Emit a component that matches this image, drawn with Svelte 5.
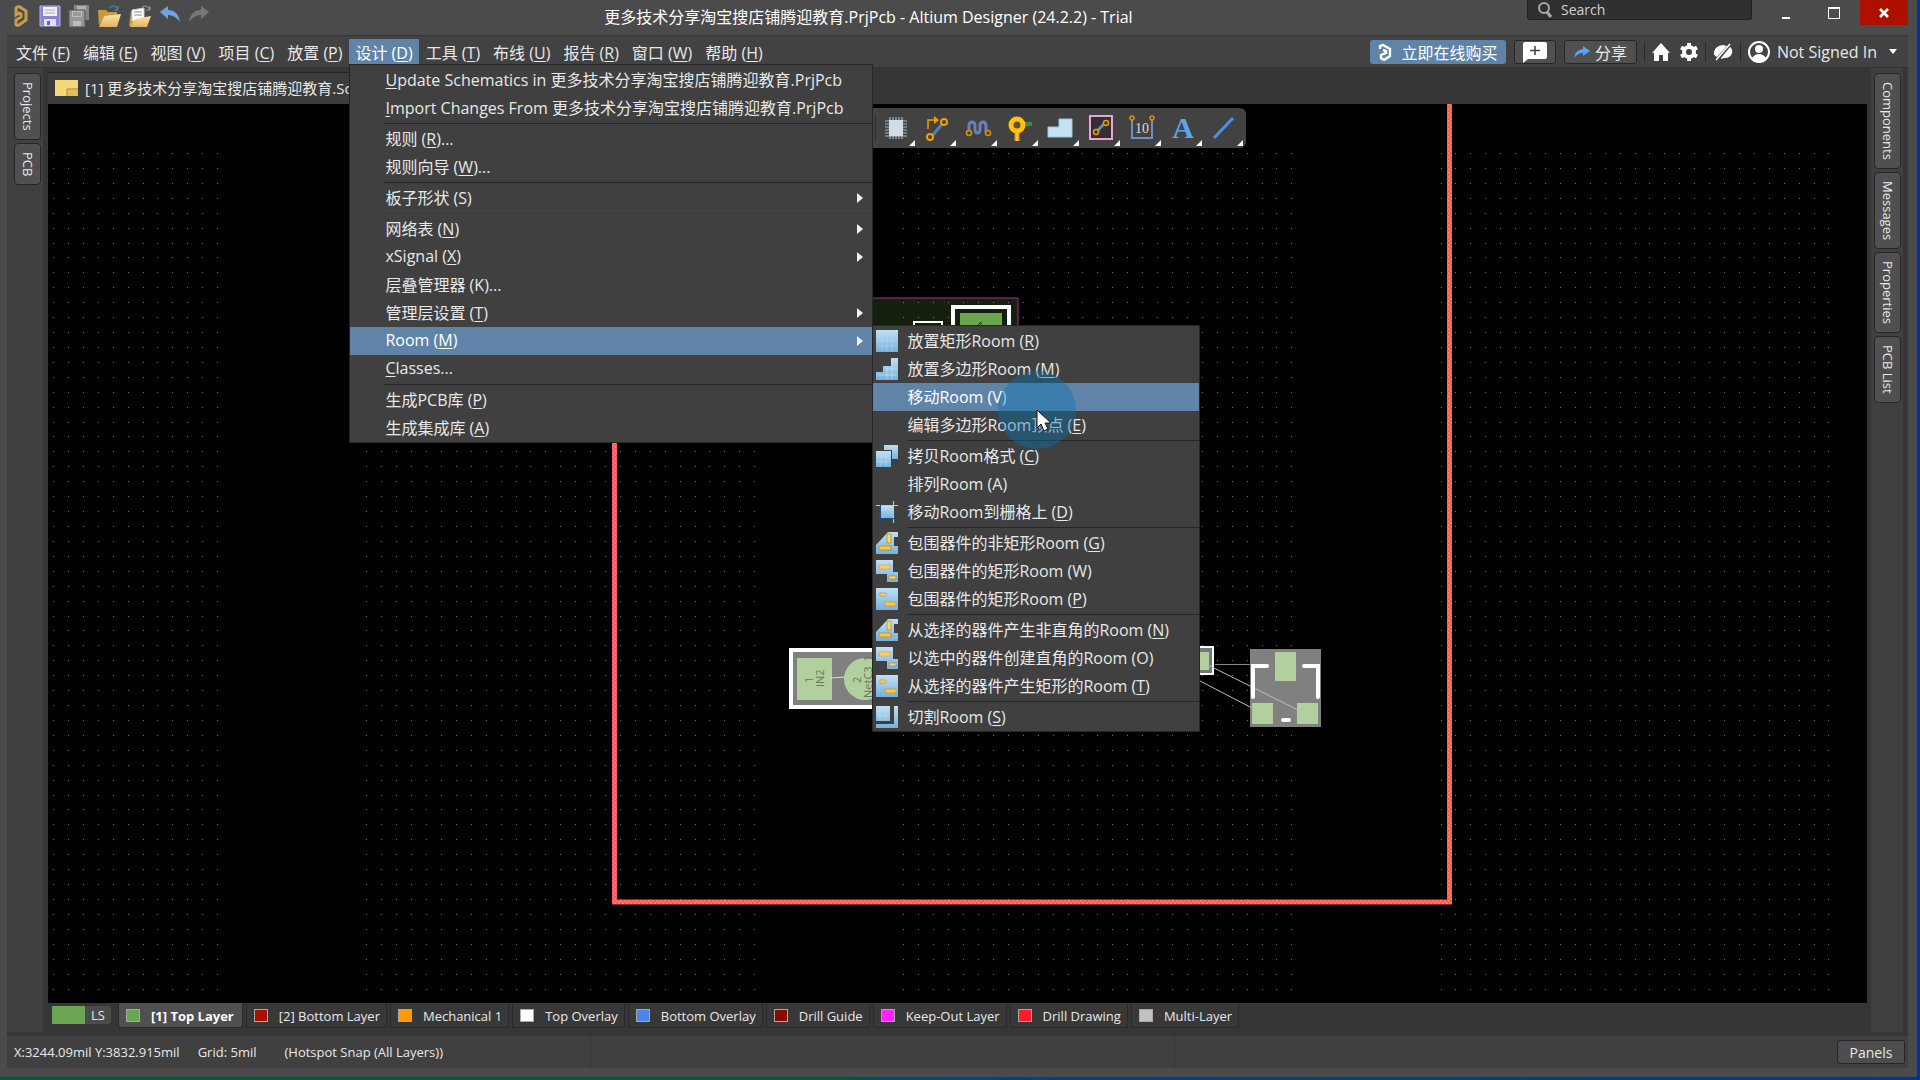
<script lang="ts">
    type Entry = { label?: string; icon?: string; arrow?: boolean; on?: boolean; sep?: boolean; faint?: boolean };

    const menus = [
        "文件 (&F)", "编辑 (&E)", "视图 (&V)", "项目 (&C)", "放置 (&P)", "设计 (&D)",
        "工具 (&T)", "布线 (&U)", "报告 (&R)", "窗口 (&W)", "帮助 (&H)",
    ];
    let opened = $state(5);

    const designMenu: Entry[] = [
        { label: "&Update Schematics in 更多技术分享淘宝搜店铺腾迎教育.PrjPcb" },
        { label: "&Import Changes From 更多技术分享淘宝搜店铺腾迎教育.PrjPcb" },
        { sep: true },
        { label: "规则 (&R)..." },
        { label: "规则向导 (&W)..." },
        { sep: true },
        { label: "板子形状 (S)", arrow: true },
        { sep: true, faint: true },
        { label: "网络表 (&N)", arrow: true },
        { label: "xSignal (&X)", arrow: true },
        { label: "层叠管理器 (K)..." },
        { label: "管理层设置 (&T)", arrow: true },
        { label: "Room (&M)", arrow: true, on: true },
        { label: "&Classes..." },
        { sep: true },
        { label: "生成PCB库 (&P)" },
        { label: "生成集成库 (&A)" },
    ];

    const roomMenu: Entry[] = [
        { label: "放置矩形Room (&R)", icon: "rect" },
        { label: "放置多边形Room (&M)", icon: "poly" },
        { label: "移动Room (V)", on: true },
        { label: "编辑多边形Room顶点 (&E)" },
        { sep: true },
        { label: "拷贝Room格式 (&C)", icon: "copy" },
        { label: "排列Room (A)" },
        { label: "移动Room到栅格上 (&D)", icon: "snap" },
        { sep: true },
        { label: "包围器件的非矩形Room (&G)", icon: "angled" },
        { label: "包围器件的矩形Room (W)", icon: "ortho" },
        { label: "包围器件的矩形Room (&P)", icon: "box" },
        { sep: true },
        { label: "从选择的器件产生非直角的Room (&N)", icon: "angled" },
        { label: "以选中的器件创建直角的Room (O)", icon: "ortho" },
        { label: "从选择的器件产生矩形的Room (&T)", icon: "box" },
        { sep: true },
        { label: "切割Room (&S)", icon: "slice" },
    ];

    const layers = [
        { name: "[1] Top Layer", color: "#6aa552", active: true },
        { name: "[2] Bottom Layer", color: "#a81000" },
        { name: "Mechanical 1", color: "#ff9a00" },
        { name: "Top Overlay", color: "#ffffff" },
        { name: "Bottom Overlay", color: "#4a85ea" },
        { name: "Drill Guide", color: "#8a0c00" },
        { name: "Keep-Out Layer", color: "#ff22ff" },
        { name: "Drill Drawing", color: "#ff1a2c" },
        { name: "Multi-Layer", color: "#c2c2c2" },
    ];

    const tools = ["chip", "route", "meander", "via", "polygon", "room", "dimension", "string", "line"];
    const leftPanels = ["Projects", "PCB"];
    const rightPanels = ["Components", "Messages", "Properties", "PCB List"];

    // visible grid points, the columns come in four bands
    const step = 14.92;
    const bands = [[0, 11], [21, 47], [57, 83], [93, 119]];
    let grid = "";
    for (const [from, to] of bands) {
        for (let c = from; c <= to; c++) {
            for (let r = 0; r <= 56; r++) {
                grid += `M${Math.round(53 + c * step)} ${Math.round(153 + r * step)}h1v1h-1z`;
            }
        }
    }

    // "&" stands before the access key
    function split(label: string) {
        const at = label.indexOf("&");
        if (at < 0) return [label, "", ""];
        return [label.slice(0, at), label[at + 1], label.slice(at + 2)];
    }
</script>

{#snippet caption(label: string)}
    {@const parts = split(label)}
    <span class="caption">{parts[0]}{#if parts[1]}<u>{parts[1]}</u>{/if}{parts[2]}</span>
{/snippet}

{#snippet roomIcon(name: string)}
    <svg width="24" height="24" viewBox="0 0 24 24">
        {#if name === "rect"}
            <path d="M1 1h22v22H1z" fill="url(#sky)" />
            <path d="M7 3v19M12 3v19M17 3v19M2 12h20M2 17h20" stroke="#b5dcf4" stroke-opacity=".5" />
        {:else if name === "poly"}
            <path d="M16 1h7v22H1v-8h7V9h8z" fill="url(#sky)" />
            <path d="M12 10v12M17 3v19M2 18h20M10 12h12" stroke="#c5e4f7" stroke-opacity=".6" />
        {:else if name === "copy"}
            <path d="M9 1h14v14H9z" fill="url(#sky)" />
            <path d="M0 6h17v17H0z" fill="#404040" />
            <path d="M1 7h15v16H1z" fill="url(#sky)" />
            <path d="M6 8v14M11 8v14M2 13h13M2 18h13" stroke="#c5e4f7" stroke-opacity=".5" />
        {:else if name === "snap"}
            <path d="M6 6h13v13H6z" fill="url(#sky)" />
            <path d="M1 5.5h22M18.500 1v22" stroke="#b9cfdd" />
            <path d="M1 18.500h22M5.500 3v19" stroke="#244d78" />
        {:else if name === "angled"}
            <path d="M1 14 13 1h10v5h-4v9h4v8H1z" fill="url(#sky)" />
            <path d="M12 3h4v9h-4z" fill="#ffd75a" stroke="#9b7b24" stroke-width=".6" />
            <path d="M4 15h12v4H4z" fill="#ffc83c" stroke="#9b7b24" stroke-width=".6" />
        {:else if name === "ortho"}
            <path d="M1 1h17v12h5v10H12v-8H1z" fill="url(#sky)" />
            <path d="M4 6h11v4H4z" fill="#ffd062" stroke="#d9a02c" stroke-width=".6" />
            <path d="M14 17h7v3h-7z" fill="#ffd062" stroke="#a57b22" stroke-width=".6" />
        {:else if name === "box"}
            <path d="M1 1h22v22H1z" fill="url(#sky)" />
            <path d="M5 6h6v3H5z" fill="#ffd062" stroke="#b88a2b" stroke-width=".6" />
            <path d="M10 15h11v4H10z" fill="#ffc83c" stroke="#b88a2b" stroke-width=".6" />
        {:else}
            <path d="M1 1h14v15H1zM19 1h4v22H1v-4h18z" fill="url(#sky)" />
            <path d="M5 2v13M10 2v13M2 6h12M2 11h12" stroke="#c5e4f7" stroke-opacity=".5" />
        {/if}
    </svg>
{/snippet}

{#snippet toolIcon(name: string)}
    <svg width="28" height="32" viewBox="0 0 28 32">
        {#if name === "chip"}
            <path d="M8 5v22M11 5v22M14 5v22M17 5v22M20 5v22M3 9h22M3 12h22M3 15h22M3 18h22M3 21h22M3 24h22" stroke="#aab3b8" stroke-width="1.200" />
            <path d="M7 8h14v16H7z" fill="#d4dce4" />
        {:else if name === "route"}
            <path d="M9 24 20 11" stroke="#5a80b0" stroke-width="3" />
            <path d="M5 17V8h9" fill="none" stroke="#f0a000" stroke-width="1.500" />
            <path d="m11 4 5 4-5 4z" fill="#f0a000" />
            <circle cx="21" cy="10" r="3" fill="#404040" stroke="#f0a000" stroke-width="2" />
            <circle cx="7" cy="25" r="3" fill="#404040" stroke="#f0a000" stroke-width="2" />
        {:else if name === "meander"}
            <path d="M5 21V14q0-4 3-4t3 4v3q0 4 2.500 4t2.500-4v-3q0-4 3-4t3 4v7" fill="none" stroke="#6683b8" stroke-width="3" />
            <circle cx="5" cy="21" r="2.500" fill="#404040" stroke="#d99100" stroke-width="1.600" />
            <circle cx="24" cy="21" r="2.500" fill="#404040" stroke="#d99100" stroke-width="1.600" />
        {:else if name === "via"}
            <path d="M16 12h11" stroke="#3f8b35" stroke-width="4" />
            <path d="M12 18v11" stroke="#f39a28" stroke-width="5" />
            <path d="M12 20v9" stroke="#ffe1a0" stroke-width="1" />
            <circle cx="12" cy="13" r="6" fill="#5f5030" stroke="#ffc505" stroke-width="5" />
        {:else if name === "polygon"}
            <path d="M13 7h13v18H2v-10h11z" fill="#c6e3f1" stroke="#96c5de" />
        {:else if name === "room"}
            <path d="M3 4h22v23H3z" fill="#303030" stroke="#eda0da" stroke-width="2" />
            <path d="m9 20 9-9" stroke="#7187ad" stroke-width="3" />
            <circle cx="19" cy="11" r="2.500" fill="#303030" stroke="#e59d00" stroke-width="1.500" />
            <circle cx="9" cy="20" r="2.500" fill="#303030" stroke="#e59d00" stroke-width="1.500" />
        {:else if name === "dimension"}
            <path d="M4 8v18h20V8" fill="none" stroke="#6f8fc4" stroke-width="2" />
            <circle cx="4" cy="6" r="2" fill="#404040" stroke="#d99100" stroke-width="1.500" />
            <circle cx="24" cy="6" r="2" fill="#404040" stroke="#d99100" stroke-width="1.500" />
            <text x="14" y="21" text-anchor="middle" font-family="'Liberation Serif', serif" font-size="14" fill="#dadada">10</text>
        {:else if name === "string"}
            <text x="14" y="26" text-anchor="middle" font-family="'Liberation Serif', serif" font-weight="bold" font-size="30" fill="#5fa5ee">A</text>
        {:else}
            <path d="M4 26 23 6" stroke="#4f8fe8" stroke-width="3" />
        {/if}
    </svg>
{/snippet}

<svg class="defs" width="0" height="0" aria-hidden="true">
    <defs>
        <linearGradient id="sky" x1="0" y1="0" x2="0" y2="1">
            <stop offset="0" stop-color="#c1dff3" />
            <stop offset="1" stop-color="#77b0dc" />
        </linearGradient>
        <linearGradient id="folder" x1="0" y1="0" x2="0" y2="1">
            <stop offset="0" stop-color="#fbe5ae" />
            <stop offset="1" stop-color="#e2b45a" />
        </linearGradient>
        <pattern id="hatch" width="4" height="4" patternUnits="userSpaceOnUse">
            <path d="M0 0h4v4H0z" fill="#ff4d86" />
            <path d="M0 0h2v2H0zM2 2h2v2H2z" fill="#ff8a1c" />
        </pattern>
    </defs>
</svg>

<div class="window">
    <header class="titlebar">
        <div class="quick">
            <svg width="22" height="24" viewBox="0 0 22 24">
                <path d="M6 4q1-2 4-1l6 4v9l-7 5q-3 1-3-1v-4l5-3v-3L9 9l-3 2z" fill="none" stroke="#c59d4b" stroke-width="3" />
            </svg>
            <button aria-label="Save">
                <svg width="22" height="24" viewBox="0 0 22 24">
                    <path d="M1 2h20v20H1z" fill="#8785cf" stroke="#b4b2e8" />
                    <path d="M4 3h14v9H4z" fill="#f0f2f4" />
                    <path d="M6 6h10M6 9h10" stroke="#a6a6b0" />
                    <path d="M5 15h12v7H5z" fill="#dfe2f2" />
                    <path d="M8 17h3v4H8z" fill="#6664a8" />
                </svg>
            </button>
            <button aria-label="Save all">
                <svg width="22" height="24" viewBox="0 0 22 24">
                    <path d="M6 1h15v15H6z" fill="#858585" />
                    <path d="M9 2h9v5H9z" fill="#b0b0b0" />
                    <path d="M1 6h16v17H1z" fill="#969696" stroke="#565656" />
                    <path d="M4 7h10v6H4z" fill="#bebebe" />
                    <path d="M5 9h8M5 11h8" stroke="#777" />
                    <path d="M5 17h8v5H5z" fill="#bcbcbc" />
                </svg>
            </button>
            <button aria-label="Open">
                <svg width="24" height="24" viewBox="0 0 24 24">
                    <path d="M1 6h8l2 2h9v4H7L2 22z" fill="#c99a42" />
                    <path d="m7 12 17-2-4 13H2z" fill="url(#folder)" />
                    <path d="M12 4q6-5 9 2m0 0V2m0 4h-4" fill="none" stroke="#4a7894" stroke-width="1.500" />
                </svg>
            </button>
            <button aria-label="Open document">
                <svg width="24" height="24" viewBox="0 0 24 24">
                    <path d="M3 7h3v15H1z" fill="#c99a42" />
                    <path d="M4 6 16 4v13H4z" fill="#fff" stroke="#ccc" />
                    <path d="M6 8h8M6 11h8" stroke="#888" />
                    <path d="m7 15 16-3-4 11H2z" fill="url(#folder)" />
                    <path d="M14 3q5-3 8 3m0 0V2m0 4h-4" fill="none" stroke="#8c949a" stroke-width="1.200" />
                </svg>
            </button>
            <button aria-label="Undo">
                <svg width="22" height="24" viewBox="0 0 22 24">
                    <path d="m1 8 8-6v4q10 0 12 12-5-7-12-7v4z" fill="#6fa3e6" />
                </svg>
            </button>
            <button aria-label="Redo">
                <svg width="22" height="24" viewBox="0 0 22 24">
                    <path d="m21 8-8-6v4Q3 6 1 18q5-7 12-7v4z" fill="#777" />
                </svg>
            </button>
        </div>
        <div class="title">更多技术分享淘宝搜店铺腾迎教育.PrjPcb - Altium Designer (24.2.2) - Trial</div>
        <label class="search">
            <svg width="16" height="16" viewBox="0 0 16 16">
                <circle cx="7" cy="6" r="5" fill="none" stroke="#a8a8a8" stroke-width="2" />
                <path d="m10 10 4 5" stroke="#a8a8a8" stroke-width="3" />
            </svg>
            <input type="text" placeholder="Search" aria-label="Search" />
        </label>
        <div class="winbuttons">
            <button aria-label="Minimize"><svg width="12" height="12" viewBox="0 0 12 12"><path d="M2 10h8v2H2z" fill="#fff" /></svg></button>
            <button aria-label="Maximize"><svg width="12" height="12" viewBox="0 0 12 12"><path d="M.5 1h11v10.500H.5z" fill="none" stroke="#fff" /><path d="M0 0h12v2H0z" fill="#fff" /></svg></button>
            <button class="close" aria-label="Close"><svg width="10" height="10" viewBox="0 0 10 10"><path d="m1 1 8 8M9 1 1 9" stroke="#fff" stroke-width="2.600" /></svg></button>
        </div>
    </header>

    <div class="menubar">
        <nav>
            {#each menus as menu, i}
                <div class="menu">
                    <button class="menu-title" class:open={opened === i} onclick={() => (opened = i)}>{@render caption(menu)}</button>
                    {#if i === 5 && opened === 5}
                        <div class="dropdown">
                            {#each designMenu as item}
                                {#if item.sep}
                                    <div class="sep" class:faint={item.faint}></div>
                                {:else}
                                    <div class="row">
                                        <button class="entry" class:on={item.on}>
                                            {@render caption(item.label)}
                                            {#if item.arrow}
                                                <svg width="6" height="10" viewBox="0 0 6 10"><path d="m0 0 6 5-6 5z" fill="#f2f2f2" /></svg>
                                            {/if}
                                        </button>
                                        {#if item.on}
                                            <div class="dropdown sub">
                                                {#each roomMenu as sub}
                                                    {#if sub.sep}
                                                        <div class="sep"></div>
                                                    {:else}
                                                        <button class="entry" class:on={sub.on}>
                                                            <span class="slot">{#if sub.icon}{@render roomIcon(sub.icon)}{/if}</span>
                                                            {@render caption(sub.label)}
                                                        </button>
                                                    {/if}
                                                {/each}
                                            </div>
                                        {/if}
                                    </div>
                                {/if}
                            {/each}
                        </div>
                    {/if}
                </div>
            {/each}
        </nav>
        <div class="account">
            <button class="buy">
                <svg width="14" height="18" viewBox="0 0 14 18"><path d="M2 6V3l3-1 7 4v7l-6 4-3-2v-3l5-2V8L5 7" fill="none" stroke="#fff" stroke-width="2.400" /></svg>
                <span>立即在线购买</span>
            </button>
            <button class="boxed note" aria-label="Comment">
                <svg width="26" height="22" viewBox="0 0 26 22"><path d="M3 1h20q2 0 2 2v13q0 2-2 2H6l-5 4V3q0-2 2-2z" fill="#fff" /><path d="M13 5v9M8 9.500h10" stroke="#444" stroke-width="1.600" /></svg>
            </button>
            <button class="boxed share">
                <svg width="16" height="14" viewBox="0 0 16 14"><path d="m9 1 7 5-7 5V8Q4 8 0 13 1 5 9 4z" fill="#58a4f2" /></svg>
                <span>分享</span>
            </button>
            <i class="divider"></i>
            <button aria-label="Home">
                <svg width="18" height="18" viewBox="0 0 18 18"><path d="m9 0 9 10h-2v8h-5v-6H7v6H2v-8H0z" fill="#fff" /></svg>
            </button>
            <button aria-label="Preferences">
                <svg width="18" height="18" viewBox="0 0 18 18">
                    <circle cx="9" cy="9" r="5" fill="none" stroke="#fff" stroke-width="4" />
                    <path d="M9 0v4M9 14v4M1 4.500l4 2M13 11.500l4 2M1 13.500l4-2M13 6.500l4-2" stroke="#fff" stroke-width="4" />
                </svg>
            </button>
            <i class="divider"></i>
            <button aria-label="Notifications off">
                <svg width="20" height="18" viewBox="0 0 20 18">
                    <path d="M1 9q1-6 9-7l4 1L4 14q-4-2-3-5zM8 15 17 4q3 2 2 6-1 5-8 5l-3 1z" fill="#fff" />
                    <path d="M3 17 17 1" stroke="#fff" stroke-width="1.500" />
                </svg>
            </button>
            <i class="divider"></i>
            <button class="user">
                <svg width="22" height="22" viewBox="0 0 22 22">
                    <circle cx="11" cy="11" r="10" fill="#444" stroke="#fff" stroke-width="2" />
                    <circle cx="11" cy="8" r="4" fill="#fff" />
                    <path d="M4 17q3-4 7-4t7 4q-3 4-7 4t-7-4z" fill="#fff" />
                </svg>
                <span>Not Signed In</span>
                <svg class="caret" width="8" height="5" viewBox="0 0 8 5"><path d="M0 0h8L4 5z" fill="#fff" /></svg>
            </button>
        </div>
    </div>

    <div class="workspace">
        <aside>
            {#each leftPanels as name}
                <button class="panel-tab">{name}</button>
            {/each}
        </aside>
        <main>
            <div class="documents">
                <button class="document">
                    <svg width="23" height="16" viewBox="0 0 23 16"><path d="M0 0h23v16H0z" fill="#f3d779" /><path d="M12 16V9h11" fill="none" stroke="#9c8544" /><path d="M13 10h10v6H13z" fill="#e0be58" /></svg>
                    <span>[1] 更多技术分享淘宝搜店铺腾迎教育.Sc</span>
                </button>
            </div>
            <div class="stage">
                <svg width="100%" height="100%">
                    <g transform="translate(-48 -104)">
                        <path d="M800 298h218v140H800z" fill="#141f0e" stroke="#a0309c" />
                        <path d={grid} fill="#747474" />
                        <path d="M953 400v-93h56v93" fill="none" stroke="#fff" stroke-width="4" />
                        <path d="M960 313h42v60h-42z" fill="#6aa550" />
                        <path d="M914 350v-28h28v28" fill="none" stroke="#fff" stroke-width="2" />
                        <path d="m978 325 3-3v4" fill="none" stroke="#1d3512" />
                        <path d="M614.500 90v812h835V90" fill="none" stroke="#ff45a0" stroke-width="5" />
                        <path d="M614.500 90v812h835V90" fill="none" stroke="url(#hatch)" stroke-width="4" />

                        <path d="M791 650h150v57H791z" fill="#808080" stroke="#fff" stroke-width="4" />
                        <path d="M797 658h35v42h-35z" fill="#b2d09e" />
                        <circle cx="865" cy="679" r="21" fill="#b2d09e" />
                        <path d="m830 678 15-1" stroke="#ddd" />
                        <g class="net">
                            <text transform="translate(813 683) rotate(-90)">1</text>
                            <text transform="translate(824 687) rotate(-90)">IN2</text>
                            <text transform="translate(861 683) rotate(-90)">2</text>
                            <text transform="translate(872 698) rotate(-90)">NetC3_1</text>
                        </g>

                        <path d="M1180 647h33v27h-33z" fill="#777" stroke="#fff" stroke-width="2" />
                        <path d="M1190 652h19v18h-19z" fill="#b2d09e" />
                        <path d="M1250 649h71v78h-71z" fill="#808080" />
                        <path d="M1275 652h21v29h-21zM1252 703h21v21h-21zM1297 703h21v21h-21z" fill="#b2d09e" />
                        <path d="M1215 664.500h60" stroke="#8c8872" />
                        <path d="m1208 665 90 45M1200 681l54 28" stroke="#bdbdbd" />
                        <path d="M1253 697v-31h14M1304 666h14v31M1283 720h6" fill="none" stroke="#fff" stroke-width="4" stroke-linecap="round" />
                    </g>
                </svg>
                <div class="toolbar">
                    <i></i>
                    {#each tools as tool}
                        <button aria-label={tool}>{@render toolIcon(tool)}</button>
                    {/each}
                </div>
            </div>
            <div class="layers">
                <button class="set"><i></i><span>LS</span></button>
                {#each layers as layer}
                    <button class="layer" class:active={layer.active}>
                        <i style="background: {layer.color}"></i>
                        <span>{layer.name}</span>
                    </button>
                {/each}
            </div>
        </main>
        <aside class="right">
            {#each rightPanels as name}
                <button class="panel-tab">{name}</button>
            {/each}
        </aside>
    </div>

    <footer>
        <div class="cell info">
            <span>X:3244.09mil Y:3832.915mil</span>
            <span>Grid: 5mil</span>
            <span class="snap">(Hotspot Snap (All Layers))</span>
        </div>
        <div class="cell"></div>
        <div class="cell last"><button class="panels">Panels</button></div>
    </footer>
</div>
<div class="taskbar"></div>

<div class="pointer">
    <svg width="78" height="78" viewBox="0 0 78 78">
        <circle cx="39" cy="39" r="39" fill="#0873b4" fill-opacity=".4" />
        <path d="M39 39v18l4-4 3 7 4-2-3-6h6z" fill="#fff" stroke="#111" />
    </svg>
</div>

<style>
    :global(body) {
        margin: 0;
        overflow: hidden;
        background: #4b4b4b;
    }
    :global(#app) {
        height: 100vh;
        display: flex;
        flex-direction: column;
        font-family: "Open Sans", "Noto Sans CJK SC", sans-serif;
        font-size: 16px;
        color: #e8e8e8;
    }
    button {
        font: inherit;
        color: inherit;
        background: none;
        border: none;
        padding: 0;
        display: flex;
        align-items: center;
        white-space: nowrap;
    }
    svg {
        display: block;
        flex: none;
    }
    .defs {
        position: absolute;
    }

    .window {
        flex: 1;
        min-height: 0;
        display: flex;
        flex-direction: column;
        padding: 0 9px 9px 7px;
        border-right: 3px solid #0033a0;
        background: #4b4b4b;
    }
    .taskbar {
        height: 3px;
        background: linear-gradient(90deg, #005a34 44%, #004a73 46%, #0033a0);
    }

    .titlebar {
        height: 35px;
        display: flex;
        align-items: flex-start;
    }
    .quick {
        display: flex;
        gap: 7px;
        padding: 4px 0 0 3px;
    }
    .title {
        flex: 1;
        line-height: 34px;
        text-align: center;
        color: #fff;
    }
    .search {
        display: flex;
        align-items: center;
        gap: 8px;
        width: 225px;
        height: 20px;
        padding-left: 9px;
        background: #303030;
        border: 1px solid #222;
        border-top: none;
        border-radius: 0 0 3px 3px;
        box-sizing: border-box;
    }
    .search input {
        flex: 1;
        min-width: 0;
        padding: 0;
        border: none;
        outline: none;
        background: none;
        font: inherit;
        font-size: 14px;
        line-height: 18px;
        color: #ddd;
    }
    .search input::placeholder {
        color: #d0d0d0;
    }
    .winbuttons {
        display: flex;
        padding-left: 10px;
    }
    .winbuttons button {
        width: 48px;
        height: 25px;
        justify-content: center;
    }
    .winbuttons .close {
        margin-left: 2px;
        background: #ae1000;
    }

    .menubar {
        height: 33px;
        display: flex;
        justify-content: space-between;
        background: #424242;
        border-top: 1px solid #363636;
        border-bottom: 1px solid #333;
        box-sizing: border-box;
    }
    nav {
        display: flex;
        align-items: flex-start;
        gap: 1px;
        padding: 3px 0 0 3px;
    }
    .menu {
        position: relative;
    }
    .menu-title {
        height: 25px;
        padding: 0 6px;
    }
    .menu-title.open {
        background: #5f84a8;
        color: #fff;
    }
    .caption {
        white-space: pre;
    }
    u {
        text-underline-offset: 2px;
    }

    .dropdown {
        position: absolute;
        z-index: 2;
        top: 100%;
        left: 0;
        width: 524px;
        padding-top: 1px;
        border: 1px solid #262626;
        background: #404040;
        box-sizing: border-box;
    }
    .row {
        position: relative;
    }
    .entry {
        width: 100%;
        height: 28px;
        padding: 0 9px 0 35px;
        justify-content: space-between;
    }
    .entry.on {
        background: #5f84a8;
        color: #fff;
    }
    .entry .caption {
        padding-bottom: 3px;
    }
    .sep {
        height: 1px;
        margin: 1px 0 1px 34px;
        background: #262626;
    }
    .sep.faint {
        background: #3b3b3b;
    }
    .sub {
        top: -2px;
        left: 100%;
        width: 328px;
    }
    .sub .entry {
        padding: 0 0 0 2px;
        justify-content: flex-start;
    }
    .slot {
        width: 32px;
        height: 24px;
    }

    .account {
        display: flex;
        align-items: center;
        padding-right: 11px;
    }
    .buy {
        height: 24px;
        width: 136px;
        gap: 9px;
        justify-content: center;
        margin-right: 8px;
        border-radius: 3px;
        background: #5f84a8;
        color: #fff;
    }
    .boxed {
        height: 24px;
        box-sizing: border-box;
        justify-content: center;
        border: 1px solid #262626;
        border-radius: 3px;
        background: #505050;
    }
    .note {
        width: 42px;
        margin-right: 8px;
    }
    .share {
        width: 73px;
        gap: 5px;
    }
    .divider {
        width: 1px;
        height: 20px;
        margin: 0 7px;
        background: #2c2c2c;
    }
    .account button + button:not(.boxed) {
        margin-left: 10px;
    }
    .user {
        gap: 7px;
    }
    .caret {
        margin-left: 5px;
    }

    .workspace {
        flex: 1;
        min-height: 0;
        display: flex;
        background: #363636;
    }
    aside {
        width: 36px;
        margin: 0 5px 4px 0;
        box-sizing: border-box;
        padding: 5px 3px 0 7px;
        display: flex;
        flex-direction: column;
        align-items: flex-start;
        gap: 3px;
        background: #404040;
    }
    aside.right {
        margin: 0 5px 4px 4px;
        width: 32px;
        padding: 5px 2px 0 3px;
    }
    .panel-tab {
        writing-mode: vertical-rl;
        width: 27px;
        box-sizing: border-box;
        padding: 8px 0;
        justify-content: center;
        border: 1px solid #262626;
        border-radius: 4px;
        background: #505050;
        font-size: 13px;
        line-height: 24px;
    }
    main {
        flex: 1;
        min-width: 0;
        display: flex;
        flex-direction: column;
    }
    .documents {
        height: 36px;
        display: flex;
        align-items: flex-end;
    }
    .document {
        height: 32px;
        padding: 0 7px 2px 7px;
        gap: 7px;
        border-top: 1px solid #262626;
        background: #3c3c3c;
        font-size: 15px;
    }
    .stage {
        position: relative;
        flex: 1;
        min-height: 0;
        overflow: hidden;
        background: #000;
    }
    .net {
        font-size: 11px;
        fill: #66785b;
    }
    .toolbar {
        position: absolute;
        top: 4px;
        left: 821px;
        height: 40px;
        padding: 0 2px 0 6px;
        display: flex;
        background: #424242;
        border-radius: 0 6px 6px 0;
    }
    .toolbar i {
        width: 1px;
        height: 24px;
        margin: 8px -1px 0 0;
        background: #2a2a2a;
    }
    .toolbar button {
        position: relative;
        width: 41px;
        height: 40px;
        justify-content: center;
    }
    .toolbar button::after {
        content: "";
        position: absolute;
        right: 1px;
        bottom: 2px;
        border: 3px solid #fff;
        border-top-color: transparent;
        border-left-color: transparent;
    }

    .layers {
        height: 33px;
        display: flex;
        align-items: flex-start;
        gap: 3px;
        padding-left: 4px;
        font-size: 13px;
    }
    .set {
        height: 18px;
        margin: 3px 4px 0 0;
    }
    .set i {
        width: 33px;
        height: 18px;
        background: #6aa552;
    }
    .set span {
        width: 26px;
        line-height: 18px;
        text-align: center;
        border-radius: 0 3px 3px 0;
        background: #4b4b4b;
    }
    .layer {
        height: 25px;
        padding: 1px 6px 0 7px;
        gap: 11px;
        border: 1px solid #2a2a2a;
        border-top: none;
        border-radius: 0 0 3px 3px;
        background: #383838;
        box-sizing: border-box;
    }
    .layer i {
        width: 14px;
        height: 13px;
        border: 1px solid #a8a8a8;
        box-sizing: border-box;
    }
    .layer.active {
        padding-right: 8px;
        background: #505050;
        color: #fff;
        font-weight: bold;
    }

    footer {
        height: 32px;
        display: flex;
        background: #404040;
        font-size: 13px;
    }
    .cell {
        width: 584px;
        box-sizing: border-box;
        border-right: 1px solid #363636;
        display: flex;
        align-items: center;
    }
    .info {
        padding-left: 7px;
        gap: 18px;
    }
    .snap {
        padding-left: 10px;
    }
    .last {
        flex: 1;
        border: none;
        justify-content: flex-end;
        padding-right: 3px;
    }
    .panels {
        width: 68px;
        height: 24px;
        justify-content: center;
        border: 1px solid #262626;
        border-radius: 3px;
        background: #4d4d4d;
        box-sizing: border-box;
        font-size: 14px;
    }

    .pointer {
        position: absolute;
        z-index: 5;
        left: 998px;
        top: 371px;
        pointer-events: none;
    }
</style>
